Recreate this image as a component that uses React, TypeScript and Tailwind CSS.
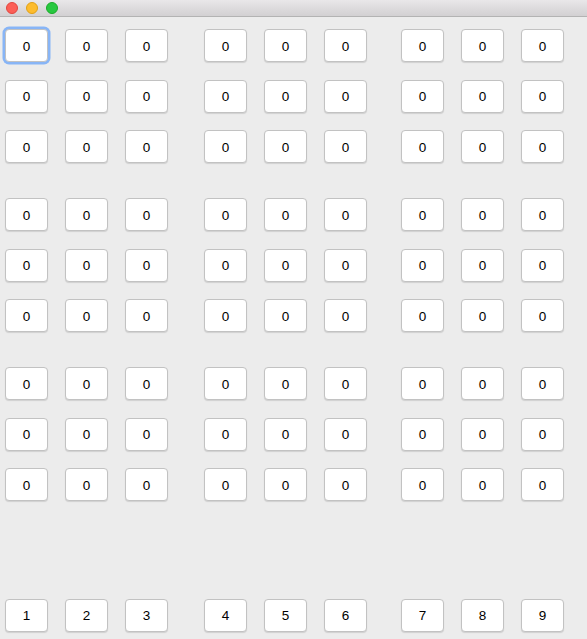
import React from "react";

const groups = [0, 1, 2];

function Cell({ label, focused }: { label: string; focused?: boolean }) {
  return (
    <button
      className={`w-[43px] h-[33px] pt-[3px] bg-white rounded-[4px] border border-[#c2c2c2] shadow-[0_1px_1px_rgba(0,0,0,0.12)] text-[13.5px] text-black flex items-center justify-center ${
        focused ? "ring-[2.5px] ring-[#88b5f6] border-[#9cc0f5]" : ""
      }`}
      style={{ fontFamily: '"Liberation Sans", Arial, sans-serif' }}
    >
      {label}
    </button>
  );
}

function Row({ labels, focusFirst }: { labels: string[]; focusFirst?: boolean }) {
  return (
    <div className="flex pl-[5px]">
      {groups.map((g) => (
        <div
          key={g}
          className={`flex gap-[17px] ${g === 1 ? "ml-[36px]" : g === 2 ? "ml-[34px]" : ""}`}
        >
          {[0, 1, 2].map((i) => (
            <Cell
              key={i}
              label={labels[g * 3 + i]}
              focused={focusFirst && g === 0 && i === 0}
            />
          ))}
        </div>
      ))}
    </div>
  );
}

export default function App() {
  const zeros = Array(9).fill("0");
  const digits = ["1", "2", "3", "4", "5", "6", "7", "8", "9"];

  return (
    <div className="w-[587px] h-[639px] bg-[#ececec] flex flex-col overflow-hidden">
      {/* window title bar */}
      <div className="h-[17px] shrink-0 bg-gradient-to-b from-[#e9e7e9] to-[#d2d0d2] border-b border-[#b3b3b3] flex items-center gap-[8px] pl-[6px]">
        <span className="w-[12px] h-[12px] rounded-full bg-[#fc5f57] border border-[#e2463f]" />
        <span className="w-[12px] h-[12px] rounded-full bg-[#fdbc2e] border border-[#e1a116]" />
        <span className="w-[12px] h-[12px] rounded-full bg-[#28c840] border border-[#1aab29]" />
      </div>

      {/* board */}
      <div className="flex flex-col pt-[12px]">
        {groups.map((b) => (
          <div
            key={b}
            className={`flex flex-col gap-[17.5px] ${b > 0 ? "mt-[35px]" : ""}`}
          >
            {[0, 1, 2].map((r) => (
              <Row key={r} labels={zeros} focusFirst={b === 0 && r === 0} />
            ))}
          </div>
        ))}
        <div className="mt-[97.5px]">
          <Row labels={digits} />
        </div>
      </div>
    </div>
  );
}
